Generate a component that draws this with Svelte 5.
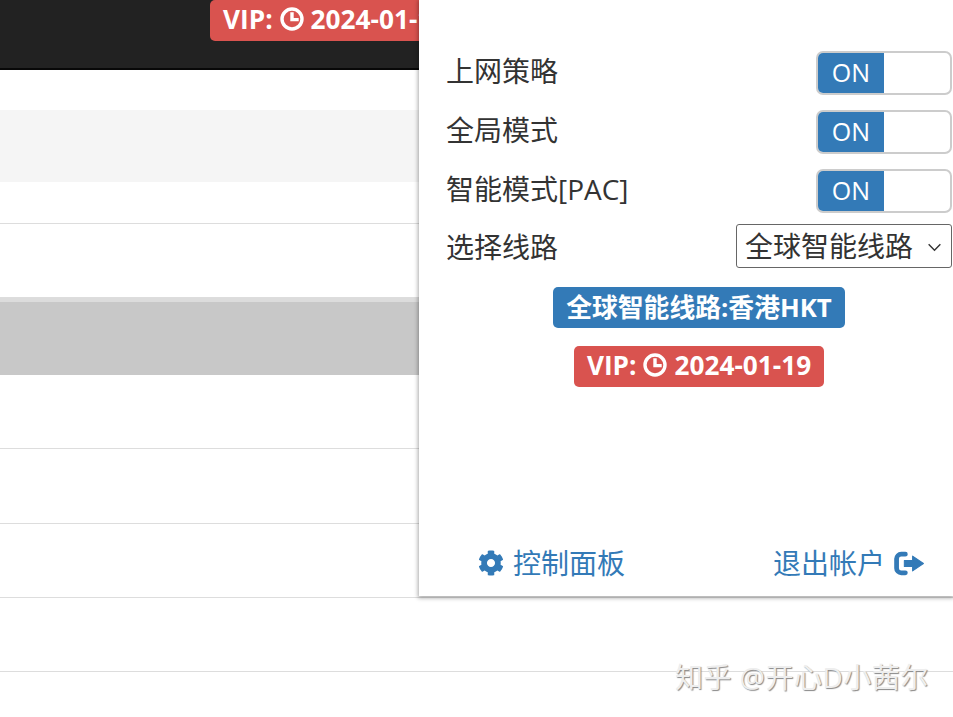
<script>
  // Popup rows
  const switches = ['上网策略', '全局模式', '智能模式[PAC]'];
  // Table rows behind the popup
  const rows = ['spacer', 'striped', 'plain', 'plain', 'active', 'plain', 'plain', 'plain', 'plain'];
</script>

{#snippet vipBadge()}
  <span class="badge red">
    VIP:
    <svg class="clock" viewBox="0 0 24 24" fill="none" stroke="currentColor" stroke-width="3.4" stroke-linecap="square">
      <circle cx="12" cy="12" r="10"></circle>
      <path d="M12 7v5.6h5"></path>
    </svg>
    2024-01-19
  </span>
{/snippet}

<div class="page">
  <header class="topbar">
    {@render vipBadge()}
  </header>

  <div class="table">
    {#each rows as row}
      <div class="row {row}"></div>
    {/each}
  </div>

  <aside class="panel">
    <div class="settings">
      {#each switches as label}
        <div class="setting">
          <span>{label}</span>
          <div class="switch">
            <span class="on">ON</span>
          </div>
        </div>
      {/each}
      <div class="setting route">
        <span>选择线路</span>
        <div class="select-wrap">
          <select>
            <option>全球智能线路</option>
          </select>
          <svg class="chevron" viewBox="0 0 16 10" fill="none" stroke="currentColor" stroke-width="1.6">
            <path d="M1.5 1.500L8 8l6.500-6.500"></path>
          </svg>
        </div>
      </div>
    </div>

    <div class="badges">
      <span class="badge blue">全球智能线路:香港HKT</span>
      {@render vipBadge()}
    </div>

    <footer class="links">
      <a href="#panel">
        <svg class="gear" viewBox="0 0 512 512" fill="currentColor">
          <path d="M487.4 315.7l-42.6-24.6c4.3-23.2 4.3-47 0-70.2l42.6-24.6c4.9-2.8 7.1-8.6 5.5-14-11.1-35.6-30-67.8-54.7-94.6-3.8-4.1-10-5.1-14.8-2.3L380.8 110c-17.9-15.4-38.5-27.3-60.8-35.1V25.8c0-5.6-3.9-10.5-9.4-11.7-36.7-8.2-74.3-7.8-109.2 0-5.5 1.2-9.4 6.1-9.4 11.7V75c-22.2 7.9-42.8 19.8-60.8 35.1L88.7 85.5c-4.9-2.8-11-1.9-14.8 2.3-24.7 26.7-43.6 58.9-54.7 94.6-1.7 5.4.6 11.2 5.5 14L67.3 221c-4.3 23.2-4.3 47 0 70.2l-42.6 24.6c-4.9 2.8-7.1 8.6-5.5 14 11.1 35.6 30 67.8 54.7 94.6 3.8 4.1 10 5.1 14.8 2.3l42.6-24.6c17.9 15.4 38.5 27.3 60.8 35.1v49.2c0 5.6 3.9 10.5 9.4 11.7 36.7 8.2 74.3 7.8 109.2 0 5.5-1.2 9.4-6.1 9.4-11.7v-49.2c22.2-7.9 42.8-19.8 60.8-35.1l42.6 24.6c4.9 2.8 11 1.9 14.8-2.3 24.7-26.7 43.6-58.9 54.7-94.6 1.5-5.5-.7-11.3-5.6-14.1zM256 336c-44.1 0-80-35.9-80-80s35.9-80 80-80 80 35.9 80 80-35.9 80-80 80z"></path>
        </svg>
        控制面板
      </a>
      <a href="#logout">
        退出帐户
        <svg class="logout" viewBox="0 0 30 24" fill="currentColor">
          <path d="M11 3H7a4.500 4.500 0 0 0-4.500 4.500v9A4.500 4.500 0 0 0 7 21h4" fill="none" stroke="currentColor" stroke-width="4.600" stroke-linecap="round"></path>
          <path d="M18 4.800l10.500 7.200L18 19.200v-4.200H10V9h8z" stroke="currentColor" stroke-width="1" stroke-linejoin="round"></path>
        </svg>
      </a>
    </footer>
  </aside>

  <div class="watermark">知乎 @开心D小茜尔</div>
</div>

<style>
  :global(body) {
    margin: 0;
    background: #fff;
  }

  .page {
    position: relative;
    height: 717px;
    overflow: hidden;
    font-family: "Open Sans", "Noto Sans CJK SC", sans-serif;
    color: #333;
  }

  .topbar {
    height: 68px;
    padding-left: 210px;
    background: #222;
    border-bottom: 2px solid #080808;
    white-space: nowrap;
  }

  .table {
    display: flex;
    flex-direction: column;
  }

  .row {
    height: 74.3px;
    box-sizing: border-box;
    border-bottom: 1px solid #ddd;
  }

  .row.spacer {
    height: 40px;
    border: 0;
  }

  .row.striped {
    height: 72px;
    background: #f5f5f5;
    border: 0;
  }

  .row.striped + .row {
    height: 42px;
  }

  .row.active {
    height: 76.7px;
    background: #c8c8c8;
    border-top: 4px solid #dcdcdc;
    border-bottom: 0;
  }

  .panel {
    position: absolute;
    top: 0;
    left: 419px;
    right: 0;
    height: 596px;
    padding: 51px 1px 0 27px;
    box-sizing: border-box;
    display: flex;
    flex-direction: column;
    background: #fff;
    box-shadow: 0 1px 4px 1px rgba(0, 0, 0, 0.34);
  }

  .settings {
    display: flex;
    flex-direction: column;
    gap: 16px;
  }

  .setting {
    display: flex;
    align-items: center;
    justify-content: space-between;
    height: 43px;
    font-size: 28px;
    line-height: 40px;
  }

  .setting > span {
    margin-top: -4px;
  }

  .setting.route {
    margin-top: -3px;
  }

  .setting.route > span {
    margin-top: 0;
  }

  .switch {
    width: 136px;
    height: 44px;
    box-sizing: border-box;
    border: 2px solid #ccc;
    border-radius: 7px;
    overflow: hidden;
  }

  .on {
    display: block;
    width: 66px;
    height: 100%;
    background: #337ab7;
    color: #fff;
    font-size: 25px;
    line-height: 39px;
    text-align: center;
  }

  .select-wrap {
    position: relative;
    margin-top: -2px;
    color: #333;
  }

  select {
    display: block;
    width: 216px;
    height: 44px;
    padding: 0 0 0 8px;
    box-sizing: border-box;
    border: 1px solid #666;
    border-radius: 3px;
    background: #fff;
    color: #333;
    font: inherit;
    appearance: none;
  }

  .chevron {
    position: absolute;
    right: 10px;
    top: 19px;
    width: 15px;
    height: 9px;
  }

  .badges {
    display: flex;
    flex-direction: column;
    align-items: center;
    gap: 18px;
    margin-top: 19px;
  }

  .badge {
    display: inline-flex;
    align-items: center;
    gap: 7px;
    height: 41px;
    padding: 0 13px 3px;
    border-radius: 5px;
    box-sizing: border-box;
    color: #fff;
    font-size: 26.2px;
    font-weight: 700;
    white-space: nowrap;
  }

  .blue {
    background: #337ab7;
    font-size: 25.8px;
  }

  .red {
    background: #d9534f;
  }

  .clock {
    width: 24px;
    height: 24px;
  }

  .links {
    display: flex;
    justify-content: space-between;
    margin-top: auto;
    padding: 0 27px 13px 32px;
    font-size: 28px;
    line-height: 40px;
  }

  .links a {
    display: flex;
    align-items: center;
    gap: 9px;
    color: #337ab7;
    text-decoration: none;
  }

  .gear {
    width: 26px;
    height: 26px;
  }

  .logout {
    width: 31px;
    height: 25px;
  }

  .watermark {
    position: absolute;
    left: 675px;
    top: 657px;
    color: #eee;
    font-size: 28px;
    letter-spacing: 0.5px;
    line-height: 40px;
    text-shadow: 1px 1px 1px #888;
    white-space: nowrap;
  }
</style>
